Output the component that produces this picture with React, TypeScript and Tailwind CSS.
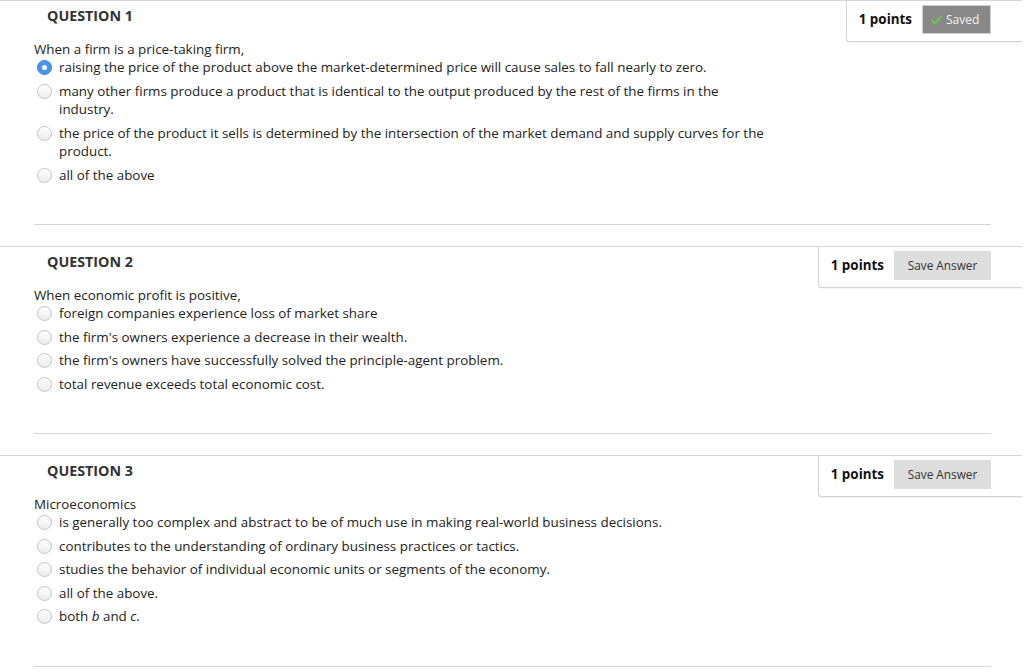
import React from "react";

type Opt = React.ReactNode;

type Q = {
  n: number;
  prompt: string;
  options: Opt[];
  selected?: number;
  saved?: boolean;
};

const questions: Q[] = [
  {
    n: 1,
    prompt: "When a firm is a price-taking firm,",
    options: [
      "raising the price of the product above the market-determined price will cause sales to fall nearly to zero.",
      "many other firms produce a product that is identical to the output produced by the rest of the firms in the industry.",
      "the price of the product it sells is determined by the intersection of the market demand and supply curves for the product.",
      "all of the above",
    ],
    selected: 0,
    saved: true,
  },
  {
    n: 2,
    prompt: "When economic profit is positive,",
    options: [
      "foreign companies experience loss of market share",
      "the firm's owners experience a decrease in their wealth.",
      "the firm's owners have successfully solved the principle-agent problem.",
      "total revenue exceeds total economic cost.",
    ],
  },
  {
    n: 3,
    prompt: "Microeconomics",
    options: [
      "is generally too complex and abstract to be of much use in making real-world business decisions.",
      "contributes to the understanding of ordinary business practices or tactics.",
      "studies the behavior of individual economic units or segments of the economy.",
      "all of the above.",
      <>
        both <i>b</i> and <i>c</i>.
      </>,
    ],
  },
];

function Radio({ on }: { on: boolean }) {
  if (on) {
    return (
      <span className="mt-[2px] flex h-[15px] w-[15px] shrink-0 items-center justify-center rounded-full border border-[#3a86e0] bg-[#4a94ec]">
        <span className="h-[5px] w-[5px] rounded-full bg-white" />
      </span>
    );
  }
  return (
    <span className="mt-[2px] h-[15px] w-[15px] shrink-0 rounded-full border border-[#c4c4c4] bg-gradient-to-b from-white to-[#ececec]" />
  );
}

function Check() {
  return (
    <svg width="11" height="10" viewBox="0 0 11 10">
      <path d="M1 5.5 L4 8.5 L10 1.5" fill="none" stroke="#6cc644" strokeWidth="2" strokeLinecap="round" strokeLinejoin="round" />
    </svg>
  );
}

function Question({ q }: { q: Q }) {
  return (
    <section className="border-t border-[#d6d6d6]">
      <div className="flex h-[39px] items-start justify-between">
        <h3 className="pl-[47px] pt-[5px] text-[14.3px] font-bold leading-[20px] text-[#333]">
          QUESTION {q.n}
        </h3>
        <div className="flex h-[41px] items-start gap-[10px] rounded-bl-[3px] border-b border-l border-[#d4d4d4] pl-[12px] pr-[31px] pt-[4px] shadow-[0_1px_1px_rgba(0,0,0,0.05)]">
          <span className="pt-[4px] text-[13.4px] font-bold leading-[20px] text-[#111]">1 points</span>
          {q.saved ? (
            <span className="flex h-[29px] w-[69px] items-center gap-[4px] border border-[#cfcfcf] bg-[#888888] pl-[8px] text-[12px] text-[#f2f2f2]">
              <Check />
              Saved
            </span>
          ) : (
            <span className="flex h-[29px] w-[97px] items-center justify-center bg-[#dddddd] text-[11.8px] text-[#333]">
              Save Answer
            </span>
          )}
        </div>
      </div>
      <div className="pl-[34px] text-[13.4px] leading-[18.5px] text-[#222]">
        <p className="mb-[-0.5px]">{q.prompt}</p>
        <ul className="flex flex-col gap-[5px] pl-[3px]">
          {q.options.map((o, i) => (
            <li key={i} className="flex items-start gap-[7px]">
              <Radio on={q.selected === i} />
              <span className="max-w-[710px]">{o}</span>
            </li>
          ))}
        </ul>
      </div>
      <div className="ml-[34px] mr-[31px] mt-[40px] mb-[21px] border-t border-[#d6d6d6]" />
    </section>
  );
}

export default function App() {
  return (
    <div className="h-[672px] w-[1024px] overflow-hidden bg-white font-['Open_Sans',sans-serif]">
      <div className="w-[1022px]">
        {questions.map((q) => (
          <Question key={q.n} q={q} />
        ))}
      </div>
    </div>
  );
}
